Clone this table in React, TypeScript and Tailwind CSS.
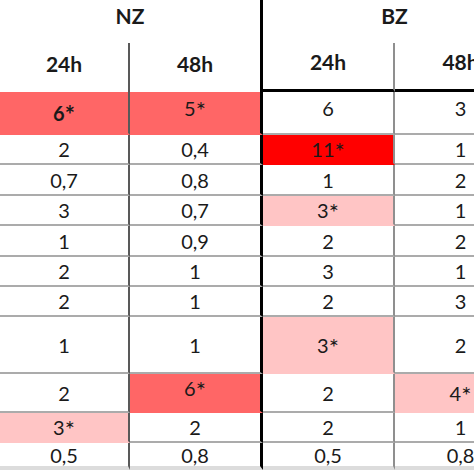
import React from "react";

type Tone = "none" | "mid" | "hot" | "pink";
type Cell = { v: string; tone?: Tone; up?: boolean; bold?: boolean };

const toneClass: Record<Tone, string> = {
  none: "bg-white border-b-[#ababab]",
  mid: "bg-[#ff6666] border-b-transparent",
  hot: "bg-[#ff0000] border-b-transparent",
  pink: "bg-[#ffc5c5] border-b-transparent",
};

// column boxes: width + right border
const colClass = [
  "w-[130px] border-r-2 border-r-[#595959]",
  "w-[133px] border-r-[3px] border-r-black",
  "w-[132px] border-r-2 border-r-[#8f8f8f]",
  "w-[131px]",
];

const c = (v: string, tone: Tone = "none", up = false, bold = false): Cell => ({ v, tone, up, bold });

const rows: { h: string; cells: Cell[] }[] = [
  { h: "h-[43px]", cells: [c("6*", "mid", false, true), c("5*", "mid", true), c("6", "none", true), c("3", "none", true)] },
  { h: "h-[30px]", cells: [c("2"), c("0,4"), c("11*", "hot"), c("1")] },
  { h: "h-[31px]", cells: [c("0,7"), c("0,8"), c("1"), c("2")] },
  { h: "h-[30px]", cells: [c("3"), c("0,7"), c("3*", "pink"), c("1")] },
  { h: "h-[31px]", cells: [c("1"), c("0,9"), c("2"), c("2")] },
  { h: "h-[30px]", cells: [c("2"), c("1"), c("3"), c("1")] },
  { h: "h-[30px]", cells: [c("2"), c("1"), c("2"), c("3")] },
  { h: "h-[57px]", cells: [c("1"), c("1"), c("3*", "pink"), c("2")] },
  { h: "h-[39px]", cells: [c("2"), c("6*", "mid", true), c("2"), c("4*", "pink")] },
  { h: "h-[30px]", cells: [c("3*", "pink"), c("2"), c("2"), c("1")] },
  { h: "h-[27px]", cells: [c("0,5"), c("0,8"), c("0,5"), c("0,8")] },
];

function Value({ v }: { v: string }) {
  const star = v.endsWith("*");
  const num = star ? v.slice(0, -1) : v;
  return (
    <span className="leading-none">
      {num}
      {star && <span className="text-[24px] leading-[16px] relative top-[3px]">*</span>}
    </span>
  );
}

export default function App() {
  return (
    <div
      className="w-[474px] h-[474px] overflow-hidden bg-white text-[#1a1a1a]"
      style={{ fontFamily: "Lato, 'Open Sans', sans-serif" }}
    >
      <div className="w-[526px] flex flex-col">
        {/* group header */}
        <div className="flex h-[43px] text-[21px] font-bold">
          <div className="w-[263px] border-r-[3px] border-r-black flex items-center justify-center pb-3">
            NZ
          </div>
          <div className="w-[263px] flex items-center justify-center pb-3">BZ</div>
        </div>
        {/* time header */}
        <div className="flex h-[49px] text-[21px] font-bold">
          {["24h", "48h", "24h", "48h"].map((t, i) => (
            <div
              key={i}
              className={`${colClass[i]} ${i >= 2 ? "border-b-[3px] border-b-black" : ""} flex items-center justify-center pb-2`}
            >
              {t}
            </div>
          ))}
        </div>
        {rows.map((r, ri) => (
          <div key={ri} className={`flex ${r.h} text-[20px]`}>
            {r.cells.map((cell, ci) => (
              <div
                key={ci}
                className={`${colClass[ci]} border-b-2 ${toneClass[cell.tone ?? "none"]} ${
                  ri === rows.length - 1 ? "!border-b-[4px] !border-b-[#dcdcdc]" : ""
                } flex items-center justify-center ${cell.up ? "pb-[10px]" : ""} ${cell.bold ? "font-bold" : ""}`}
              >
                <Value v={cell.v} />
              </div>
            ))}
          </div>
        ))}
      </div>
    </div>
  );
}
